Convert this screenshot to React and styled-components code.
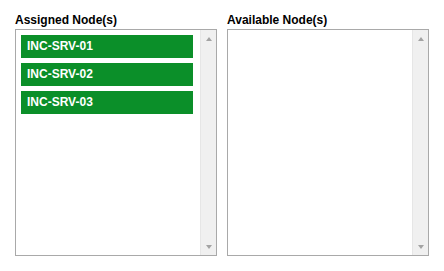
import styled, { createGlobalStyle } from "styled-components";

const GlobalStyle = createGlobalStyle`
  body {
    margin: 0;
    background: #ffffff;
    font-family: "Liberation Sans", Arial, sans-serif;
  }
`;

const Page = styled.div`
  display: flex;
  gap: 10px;
  padding: 13px 0 0 15px;
`;

const Column = styled.div`
  display: flex;
  flex-direction: column;
  width: 202px;
`;

const Label = styled.div`
  font-size: 12px;
  font-weight: bold;
  color: #000;
  line-height: 14px;
  margin-bottom: 2px;
`;

const ListBox = styled.div`
  display: flex;
  height: 227px;
  box-sizing: border-box;
  border: 1px solid #a9a9a9;
  background: #fff;
`;

const Items = styled.div`
  flex: 1;
  display: flex;
  flex-direction: column;
  gap: 5px;
  padding: 5px 7px 0 5px;
`;

const Item = styled.div`
  height: 23px;
  line-height: 23px;
  background: #0b8f29;
  color: #fff;
  font-size: 12px;
  font-weight: bold;
  padding-left: 6px;
`;

const Scrollbar = styled.div`
  width: 15px;
  background: #f0f0f0;
  border-left: 1px solid #e6e6e6;
  display: flex;
  flex-direction: column;
  justify-content: space-between;
  align-items: center;
  padding: 7px 0 6px;
`;

const Arrow = styled.div`
  width: 0;
  height: 0;
  border-left: 3.5px solid transparent;
  border-right: 3.5px solid transparent;
  ${(p) =>
    p.$down
      ? "border-top: 4px solid #a3a3a3;"
      : "border-bottom: 4px solid #a3a3a3;"}
`;

const NodeList = ({ title, nodes }) => (
  <Column>
    <Label>{title}</Label>
    <ListBox>
      <Items>
        {nodes.map((n) => (
          <Item key={n}>{n}</Item>
        ))}
      </Items>
      <Scrollbar>
        <Arrow />
        <Arrow $down />
      </Scrollbar>
    </ListBox>
  </Column>
);

export default function App() {
  return (
    <>
      <GlobalStyle />
      <Page>
        <NodeList
          title="Assigned Node(s)"
          nodes={["INC-SRV-01", "INC-SRV-02", "INC-SRV-03"]}
        />
        <NodeList title="Available Node(s)" nodes={[]} />
      </Page>
    </>
  );
}
